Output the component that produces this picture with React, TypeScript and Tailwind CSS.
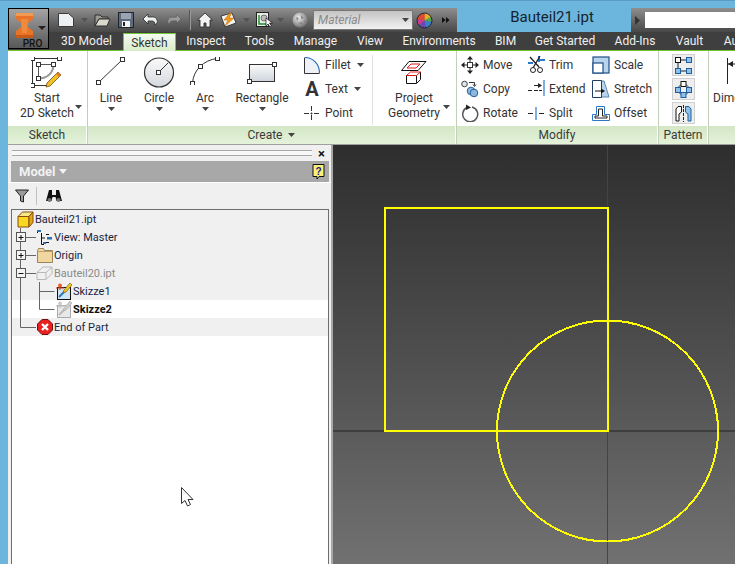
import React from "react";

const Caret = ({ className = "" }: { className?: string }) => (
  <svg width="7" height="4" viewBox="0 0 7 4" className={className}>
    <path d="M0 0h7L3.5 4z" fill="#444" />
  </svg>
);

const tabs: [string, string][] = [
  ["3D Model", "w-[71px]"],
  ["Sketch", "w-[55px]"],
  ["Inspect", "w-[58px]"],
  ["Tools", "w-[49px]"],
  ["Manage", "w-[63px]"],
  ["View", "w-[46px]"],
  ["Environments", "w-[92px]"],
  ["BIM", "w-[41px]"],
  ["Get Started", "w-[78px]"],
  ["Add-Ins", "w-[62px]"],
  ["Vault", "w-[47px]"],
  ["Autodesk", "w-[72px]"],
];

const Sq = ({ x, y, s = 4, c = "#333", f = "#fff" }: { x: number; y: number; s?: number; c?: string; f?: string }) => (
  <rect x={x - s / 2 + 0.5} y={y - s / 2 + 0.5} width={s} height={s} fill={f} stroke={c} />
);

const Qat = () => (
  <div className="flex items-center h-[24px] pl-[10px]">
    <svg width="16" height="16" viewBox="0 0 16 16">
      <path d="M0.500 1.500h10l5 4.500v8.500h-15z" fill="#eef1f4" stroke="#3a3a3a" />
    </svg>
    <Caret className="ml-[7px] opacity-60" />
    <svg width="17" height="16" viewBox="0 0 17 16" className="ml-[6px]">
      <path d="M1 3h5l2 2h6v2H5L1 14z" fill="#9a9a8e" stroke="#2e2e2e" />
      <path d="M1 14l4-7h11l-3 7z" fill="#d8d8cc" stroke="#2e2e2e" />
    </svg>
    <svg width="16" height="16" viewBox="0 0 16 16" className="ml-[7px]">
      <rect x="0.500" y="0.500" width="15" height="15" fill="#5d6a7c" stroke="#20252c" />
      <rect x="3" y="1" width="10" height="6" fill="#9aa4b2" />
      <rect x="4" y="9" width="8" height="6" fill="#f4f4f4" />
      <rect x="5" y="10" width="2" height="4" fill="#222" />
    </svg>
    <svg width="16" height="14" viewBox="0 0 16 14" className="ml-[8px]">
      <path d="M6 1L1 6l5 5V8h4c2 0 3 1 3 4 2-2 3-3 2-5-1-3-3-3-5-3H6z" fill="#eef0f2" stroke="#2a2a2a" strokeWidth="0.8" />
    </svg>
    <svg width="15" height="14" viewBox="0 0 16 14" className="ml-[9px] opacity-40">
      <path d="M10 1l5 5-5 5V8H6c-2 0-3 1-3 4-2-2-3-3-2-5 1-3 3-3 5-3h4z" fill="#ddd" stroke="#444" strokeWidth="0.8" />
    </svg>
    <div className="ml-[7px] w-[2px] h-[20px] bg-[#555] border-r border-[#999]" />
    <svg width="16" height="16" viewBox="0 0 16 16" className="ml-[6px]">
      <path d="M8 1L0.500 8H3v7h4v-4h2v4h4V8h2.500z" fill="#f2f2f2" stroke="#222" strokeWidth="0.8" />
    </svg>
    <svg width="17" height="16" viewBox="0 0 17 16" className="ml-[7px]">
      <path d="M1 4l11-3 4 10-11 4z" fill="#f4f4f4" stroke="#222" strokeWidth="0.8" />
      <path d="M10 1L4 8h4l-3 6 9-8H9l3-5z" fill="#f29a1c" stroke="#b85f00" strokeWidth="0.5" />
    </svg>
    <Caret className="ml-[6px] opacity-60" />
    <svg width="17" height="16" viewBox="0 0 17 16" className="ml-[6px]">
      <rect x="0.500" y="0.500" width="12" height="14" fill="#e6efe6" stroke="#222" />
      <path d="M3 3v9h7" fill="none" stroke="#1f8a2c" strokeWidth="1.4" />
      <circle cx="8" cy="6" r="3" fill="#bbb" stroke="#333" strokeWidth="0.6" />
      <path d="M10 6v8l2-2 2 3 1.500-1-2-3h3z" fill="#fff" stroke="#111" strokeWidth="0.7" />
    </svg>
    <Caret className="ml-[4px] opacity-60" />
    <svg width="16" height="16" viewBox="0 0 16 16" className="ml-[8px]">
      <defs>
        <radialGradient id="sp" cx="0.4" cy="0.35" r="0.7">
          <stop offset="0" stopColor="#f0f0f0" />
          <stop offset="1" stopColor="#6a6a6a" />
        </radialGradient>
      </defs>
      <circle cx="8" cy="8" r="7.500" fill="url(#sp)" />
      <path d="M4 5l3 1-2 3zM9 3l3 3-3 1zM6 11l4-1 1 3zM12 8l2 1-2 3z" fill="#8a8a8a" />
    </svg>
    <div className="ml-[5px] w-[100px] h-[20px] bg-gradient-to-b from-[#c4c4c4] to-[#f2f2f2] flex items-center justify-between pl-[4px] pr-[3px] border border-[#777]">
      <span className="italic text-[12px] text-[#8a8a8a] leading-none">Material</span>
      <Caret />
    </div>
    <svg width="17" height="17" viewBox="0 0 17 17" className="ml-[3px]">
      <path d="M8.500 8.500V1A7.500 7.500 0 0 1 15 5z" fill="#e8b020" />
      <path d="M8.500 8.500L15 5a7.500 7.500 0 0 1 1 5z" fill="#50a848" />
      <path d="M8.500 8.500L16 10a7.500 7.500 0 0 1-6 6z" fill="#3a80c8" />
      <path d="M8.500 8.500L10 16a7.500 7.500 0 0 1-7-3z" fill="#6a48b0" />
      <path d="M8.500 8.500L3 13a7.500 7.500 0 0 1-2-6z" fill="#d03898" />
      <path d="M8.500 8.500L1 7a7.500 7.500 0 0 1 7.500-6z" fill="#e04830" />
      <circle cx="8.500" cy="8.500" r="7.500" fill="none" stroke="#223" />
    </svg>
    <svg width="8" height="6" viewBox="0 0 8 6" className="ml-[9px]">
      <path d="M0 0l3.500 3L0 6zM4 0l3.500 3L4 6z" fill="#111" />
    </svg>
  </div>
);

const LargeBtn = ({ w, icon, lines, caret }: { w: string; icon: React.ReactNode; lines: string[]; caret?: boolean }) => (
  <div className={`${w} shrink-0 flex flex-col items-center`}>
    <div className="h-[40px] pt-[6px] flex items-start justify-center">{icon}</div>
    <div className="text-center leading-[15px] whitespace-nowrap">
      {lines.map((l) => (
        <div key={l}>{l}</div>
      ))}
    </div>
    {caret && <Caret className="mt-[1px]" />}
  </div>
);

const iconStart = (
  <svg width="32" height="32" viewBox="0 0 32 32">
    <path d="M1.500 28.500v-27h27M1.500 28.500H16" fill="none" stroke="#333" strokeWidth="1" />
    <path d="M7.500 7.500h15c0 8-6 14-15 14z" fill="#fff" stroke="#555" />
    <path d="M22.500 7.500c0 8-6 14-15 14" fill="none" stroke="#999" strokeWidth="2" />
    <Sq x={1} y={1} /><Sq x={28} y={1} /><Sq x={1} y={28} /><Sq x={7} y={7} /><Sq x={22} y={7} /><Sq x={7} y={21} />
    <path d="M27 15l3 3-11 11-4 1 1-4z" fill="#f2c029" stroke="#6b4d10" strokeWidth="0.8" />
    <path d="M27 15l3 3-2 2-3-3z" fill="#e27a2a" />
  </svg>
);
const iconLine = (
  <svg width="30" height="28" viewBox="0 0 30 28">
    <path d="M2.500 25.500L26.500 2.500" stroke="#333" />
    <Sq x={2} y={25} /><Sq x={26} y={2} />
  </svg>
);
const iconCircle = (
  <svg width="32" height="32" viewBox="0 0 32 32">
    <defs>
      <linearGradient id="cg" x1="0" y1="0" x2="0" y2="1">
        <stop offset="0" stopColor="#fafafa" />
        <stop offset="1" stopColor="#d4d8de" />
      </linearGradient>
    </defs>
    <circle cx="16" cy="15.500" r="14.500" fill="url(#cg)" stroke="#333" strokeWidth="1.2" />
    <path d="M16 15l9-9" stroke="#333" />
    <Sq x={15} y={15} />
  </svg>
);
const iconArc = (
  <svg width="30" height="28" viewBox="0 0 30 28">
    <path d="M2.500 26.500C3 13 14 3 27 1.500" fill="none" stroke="#333" />
    <Sq x={2} y={26} /><Sq x={10} y={9} /><Sq x={27} y={1} />
  </svg>
);
const iconRect = (
  <svg width="30" height="22" viewBox="0 0 30 22">
    <defs>
      <linearGradient id="rg" x1="0" y1="0" x2="0" y2="1">
        <stop offset="0" stopColor="#fafafa" />
        <stop offset="1" stopColor="#cfd4dc" />
      </linearGradient>
    </defs>
    <rect x="2.500" y="2.500" width="25" height="17" fill="url(#rg)" stroke="#333" />
    <Sq x={2} y={19} /><Sq x={27} y={2} />
  </svg>
);
const iconFillet = (
  <svg width="16" height="17" viewBox="0 0 16 17">
    <path d="M0.500 1v15H15c0-8-6-15-14-15" fill="#eef1f5" />
    <path d="M0.500 1v15.500H15.500" fill="none" stroke="#333" />
    <path d="M0.500 0.500C9 0.500 15.500 7 15.500 16" fill="none" stroke="#2a6fc0" strokeWidth="1.200" />
  </svg>
);
const iconPoint = (
  <svg width="16" height="16" viewBox="0 0 16 16">
    <path d="M0 8.500h5M10 8.500h5M7.500 1v5M7.500 10v5M7 8h1v1H7z" stroke="#333" fill="none" />
  </svg>
);
const iconProject = (
  <svg width="26" height="25" viewBox="0 0 26 25">
    <path d="M0.500 10.500L8 1.500h17L17 10.500z" fill="#fff" stroke="#111" />
    <path d="M6 8l4-4h9l-4 4z" fill="none" stroke="#e01818" />
    <path d="M5.500 15.500h10v8h-10z" fill="#fff" stroke="#111" />
    <path d="M15.500 23.500l4-4V12" fill="#fff" stroke="#111" />
    <path d="M5.500 15.500l4-3.500h10l-4 3.500z" fill="#fff" stroke="#e01818" />
    <path d="M5.500 15.500h10" stroke="#e01818" />
  </svg>
);

const SmallItem = ({ icon, label, caret, iconW, gap }: { icon: React.ReactNode; label: string; caret?: string; iconW: string; gap: string }) => (
  <div className={`h-[24px] flex items-center ${gap}`}>
    <div className={`${iconW} shrink-0 flex justify-center items-center`}>{icon}</div>
    <span className="whitespace-nowrap">{label}</span>
    {caret && <Caret className={caret} />}
  </div>
);

const blue = "#2a78c8";
const modifyCols: { label: string; icon: React.ReactNode }[][] = [
  [
    {
      label: "Move",
      icon: (
        <svg width="18" height="18" viewBox="0 0 18 18">
          <rect x="6.500" y="6.500" width="5" height="5" fill="#fff" stroke="#333" />
          <path d="M9 0l3 3.500H6zM9 18l3-3.500H6zM0 9l3.500-3v6zM18 9l-3.500-3v6z" fill="#222" />
          <path d="M9 3v3M9 12v3M3 9h3M12 9h3" stroke="#222" />
        </svg>
      ),
    },
    {
      label: "Copy",
      icon: (
        <svg width="18" height="18" viewBox="0 0 18 18">
          <circle cx="3.500" cy="4" r="2.800" fill="#dce6f0" stroke="#444" />
          <circle cx="10" cy="11" r="3.800" fill="#8ab8e0" stroke="#2a5f9a" />
          <circle cx="13" cy="13" r="3.800" fill="#8ab8e0" stroke="#2a5f9a" />
          <path d="M8 2.500h5.500v3M12 4.500l1.500 2 1.500-2" fill="none" stroke="#333" />
        </svg>
      ),
    },
    {
      label: "Rotate",
      icon: (
        <svg width="18" height="18" viewBox="0 0 18 18">
          <path d="M6 3.500a7.500 7.500 0 1 0 5-.5" fill="none" stroke="#555" strokeWidth="1.500" />
          <path d="M5 0.500l5 3-5 2.500z" fill="#222" />
        </svg>
      ),
    },
  ],
  [
    {
      label: "Trim",
      icon: (
        <svg width="17" height="18" viewBox="0 0 17 18">
          <path d="M0 7h5M11 4h6M11 0v6" stroke={blue} strokeWidth="2" fill="none" />
          <path d="M2 1l9 10M12 0L5 12" stroke="#222" fill="none" strokeWidth="1.300" />
          <circle cx="5" cy="14" r="2.500" fill="#fff" stroke="#222" />
          <circle cx="12" cy="14" r="2.500" fill="#fff" stroke="#222" />
        </svg>
      ),
    },
    {
      label: "Extend",
      icon: (
        <svg width="17" height="18" viewBox="0 0 17 18">
          <path d="M0 10.500h4M6 10.500h4M11 10.500h3" stroke="#222" />
          <path d="M6 5.500h6" stroke="#222" />
          <path d="M10 3l4 2.500-4 2.500z" fill="#222" />
          <path d="M16 0v16" stroke={blue} strokeWidth="1.200" />
        </svg>
      ),
    },
    {
      label: "Split",
      icon: (
        <svg width="17" height="18" viewBox="0 0 17 18">
          <path d="M0 9.500h5M11 9.500h5" stroke="#222" />
          <path d="M8 3v13" stroke={blue} strokeWidth="1.200" />
        </svg>
      ),
    },
  ],
  [
    {
      label: "Scale",
      icon: (
        <svg width="18" height="18" viewBox="0 0 18 18">
          <rect x="1" y="1" width="16" height="16" fill="#b8d4ec" stroke="#1f4f86" strokeWidth="1.200" />
          <rect x="1" y="7" width="10" height="10" fill="#fff" stroke="#1f4f86" strokeWidth="1.200" />
        </svg>
      ),
    },
    {
      label: "Stretch",
      icon: (
        <svg width="18" height="18" viewBox="0 0 18 18">
          <path d="M12 1l5 16H9V1z" fill="#b8d4ec" stroke="#5a88b4" />
          <path d="M0.500 0.500h9v17h-9z" fill="#fff" stroke="#1f3f66" />
          <path d="M3 11h7" stroke="#111" />
          <path d="M9 8.500l4 2.500-4 2.500z" fill="#111" />
        </svg>
      ),
    },
    {
      label: "Offset",
      icon: (
        <svg width="18" height="16" viewBox="0 0 18 16">
          <path d="M0.500 15.500v-6h4v-8h8v8h5v6z" fill="none" stroke={blue} />
          <path d="M3 13v-2h3.500V4h4v7H15v2z" fill="none" stroke="#222" />
        </svg>
      ),
    },
  ],
];

const patternIcons = [
  <svg key="a" width="17" height="17" viewBox="0 0 17 17">
    <path d="M3 3h11M3 3v11M3 14h11" stroke="#222" fill="none" />
    <rect x="0.500" y="0.500" width="5" height="5" fill="#fff" stroke="#111" />
    <rect x="11.500" y="0.500" width="5" height="5" fill="#8ec0ea" stroke="#1f5f9f" />
    <rect x="0.500" y="11.500" width="5" height="5" fill="#8ec0ea" stroke="#1f5f9f" />
    <rect x="11.500" y="11.500" width="5" height="5" fill="#8ec0ea" stroke="#1f5f9f" />
  </svg>,
  <svg key="b" width="17" height="17" viewBox="0 0 17 17">
    <circle cx="8.500" cy="8.500" r="5.500" fill="none" stroke="#444" />
    <rect x="6" y="0.500" width="5" height="5" fill="#fff" stroke="#111" />
    <rect x="0.500" y="6.500" width="5" height="5" fill="#8ec0ea" stroke="#1f5f9f" />
    <rect x="11.500" y="6.500" width="5" height="5" fill="#8ec0ea" stroke="#1f5f9f" />
    <rect x="6" y="11.500" width="5" height="5" fill="#8ec0ea" stroke="#1f5f9f" />
  </svg>,
  <svg key="c" width="17" height="17" viewBox="0 0 17 17">
    <path d="M6.500 1.500H3L1 4v12h3V9l2.500-2z" fill="#fff" stroke="#111" />
    <path d="M10.500 1.500H14L16 4v12h-3V9l-2.500-2z" fill="#8ec0ea" stroke="#1f5f9f" />
    <path d="M8.500 0v17" stroke="#222" strokeDasharray="3 1" />
  </svg>,
];

const PanelBar = ({ w, children }: { w: string; children: React.ReactNode }) => (
  <div className={`${w} h-[18px] shrink-0 flex items-center justify-center gap-[6px] bg-gradient-to-b from-[#d3e7c5] to-[#e4f2da] text-[#3a3a3a] leading-none`}>
    {children}
  </div>
);

const Sep = () => (
  <div className="w-[2px] shrink-0 flex">
    <div className="w-[1px] bg-white" />
    <div className="w-[1px] bg-[#c3cfbb]" />
  </div>
);

const Ribbon = () => (
  <div className="h-[94px] shrink-0 flex flex-col bg-white text-[12px] text-[#333]">
    <div className="h-[75px] flex">
      <div className="w-[78px] shrink-0 relative">
        <LargeBtn w="w-[78px]" icon={iconStart} lines={["Start", "2D Sketch"]} />
        <Caret className="absolute left-[67px] top-[54px]" />
      </div>
      <Sep />
      <div className="w-[367px] shrink-0 flex">
        <LargeBtn w="w-[46px]" icon={iconLine} lines={["Line"]} caret />
        <LargeBtn w="w-[50px]" icon={iconCircle} lines={["Circle"]} caret />
        <LargeBtn w="w-[42px]" icon={iconArc} lines={["Arc"]} caret />
        <LargeBtn w="w-[72px]" icon={<div className="pt-[5px]">{iconRect}</div>} lines={["Rectangle"]} caret />
        <div className="w-[74px] shrink-0 pl-[6px] pt-[2px]">
          <SmallItem iconW="w-[16px]" gap="gap-[5px]" icon={iconFillet} label="Fillet" caret="ml-[1px]" />
          <SmallItem
            iconW="w-[16px]"
            gap="gap-[5px]"
            icon={<span className="text-[20px] font-bold leading-none text-[#333]">A</span>}
            label="Text"
            caret="ml-[1px]"
          />
          <SmallItem iconW="w-[16px]" gap="gap-[5px]" icon={iconPoint} label="Point" />
        </div>
        <div className="w-[1px] h-[70px] mt-[4px] bg-[#e2e2e2]" />
        <div className="flex-1 relative">
          <LargeBtn w="w-full" icon={<div className="pt-[3px]">{iconProject}</div>} lines={["Project", "Geometry"]} />
          <Caret className="absolute left-[70px] top-[54px]" />
        </div>
      </div>
      <Sep />
      <div className="w-[200px] shrink-0 flex pt-[2px]">
        {modifyCols.map((col, i) => (
          <div key={i} className={`${i === 0 ? "w-[66px]" : i === 1 ? "w-[65px]" : "w-[69px]"} shrink-0 pl-[4px]`}>
            {col.map((it) => (
              <SmallItem key={it.label} iconW="w-[18px]" gap="gap-[4px]" icon={it.icon} label={it.label} />
            ))}
          </div>
        ))}
      </div>
      <Sep />
      <div className="w-[48px] shrink-0 flex flex-col items-center pt-[3px] gap-[2px]">
        {patternIcons.map((ic, i) => (
          <div key={i} className="w-[23px] h-[22px] bg-[#eeeeee] border border-[#d0d0d0] flex items-center justify-center">
            {ic}
          </div>
        ))}
      </div>
      <Sep />
      <div className="flex-1 pl-[4px] overflow-hidden">
        <div className="h-[40px] pt-[7px] pl-[14px]">
          <svg width="14" height="26" viewBox="0 0 14 26">
            <path d="M0.500 0v26M1 6h14" stroke="#222" fill="none" />
            <path d="M1 6l5-3v6z" fill="#222" />
          </svg>
        </div>
        <div className="leading-[15px]">Dimension</div>
      </div>
    </div>
    <div className="flex">
      <PanelBar w="w-[78px]">Sketch</PanelBar>
      <Sep />
      <PanelBar w="w-[367px]">
        <span>Create</span>
        <Caret />
      </PanelBar>
      <Sep />
      <PanelBar w="w-[200px]">Modify</PanelBar>
      <Sep />
      <PanelBar w="w-[48px]">Pattern</PanelBar>
      <Sep />
      <PanelBar w="flex-1"> </PanelBar>
    </div>
    <div className="h-[1px] bg-[#9f9f9f]" />
  </div>
);

const Gutter = ({ w, children }: { w: number; children: React.ReactNode }) => (
  <svg width={w} height="18" viewBox={`0 0 ${w} 18`} className="shrink-0">
    {children}
  </svg>
);
const Exp = ({ plus }: { plus?: boolean }) => (
  <g>
    <rect x="4.500" y="4.500" width="9" height="9" fill="#f4f4f4" stroke="#555" />
    <path d={plus ? "M6.500 9h5M9 6.500v5" : "M6.500 9h5"} stroke="#111" fill="none" transform="translate(0 0.500)" />
  </g>
);
const L = "#666";
const treeIcons = {
  part: (
    <svg width="17" height="17" viewBox="0 0 17 17" className="shrink-0">
      <path d="M1 5.500h11v10.500H1z" fill="#f8d820" stroke="#8a4a10" />
      <path d="M1 5.500L5.500 1H16L12 5.500z" fill="#f8e888" stroke="#8a4a10" />
      <path d="M12 5.500L16 1v10.500l-4 4.500z" fill="#e0a818" stroke="#8a4a10" />
    </svg>
  ),
  view: (
    <svg width="17" height="15" viewBox="0 0 17 15" className="shrink-0">
      <path d="M1.500 3V1M5.500 3v11.500H8M5.500 8H9" fill="none" stroke="#111" />
      <path d="M10 4.500h3M10 12.500h3" stroke="#111" fill="none" />
      <rect x="1" y="0" width="4" height="2" fill="#2a6fb0" />
      <rect x="11" y="7" width="5" height="2.500" fill="#2a6fb0" />
      <rect x="7" y="12" width="3" height="2" fill="#2a6fb0" />
    </svg>
  ),
  folder: (
    <svg width="16" height="15" viewBox="0 0 16 15" className="shrink-0">
      <path d="M0.500 14.500v-12l1-2h5l1 2h8v12z" fill="#f2d6a0" stroke="#9a845a" />
      <path d="M0.500 3.500h15" stroke="#b8a070" />
    </svg>
  ),
  ghost: (
    <svg width="17" height="14" viewBox="0 0 17 14" className="shrink-0">
      <path d="M1 6.500h9v7H1zM1 6.500L7 1h9l-6 5.500zM10 13.500l6-6V1" fill="#f0f0f0" stroke="#b8b8b8" />
    </svg>
  ),
  sketch: (active: boolean) => (
    <svg width="16" height="17" viewBox="0 0 16 17" className="shrink-0">
      <rect x="1.500" y="4.500" width="13" height="12" fill={active ? "#d0e4f4" : "#e8e8e8"} stroke={active ? "#111" : "#aaa"} />
      <path d="M3 14l8-8" stroke={active ? "#2a78c8" : "#bbb"} strokeWidth="2" />
      <path d="M14 0l2 2-6 7-3 1 1-3z" fill={active ? "#f2c820" : "#ccc"} stroke={active ? "#6b4d10" : "#aaa"} strokeWidth="0.6" />
      <circle cx="4" cy="2.500" r="2" fill={active ? "#e8602a" : "#ccc"} />
      <path d="M0 5h8M4 4v3" stroke={active ? "#c8401a" : "#bbb"} />
    </svg>
  ),
  stop: (
    <svg width="16" height="16" viewBox="0 0 16 16" className="shrink-0">
      <path d="M5 0.500h6L15.500 5v6L11 15.500H5L0.500 11V5z" fill="#e82020" stroke="#701010" />
      <path d="M5 5l6 6M11 5l-6 6" stroke="#fff" strokeWidth="2.400" />
    </svg>
  ),
};

const Row = ({ bg, gutter, w, icon, text, cls }: { bg: string; gutter: React.ReactNode; w: number; icon: React.ReactNode; text: string; cls?: string }) => (
  <div className={`h-[18px] flex items-center ${bg}`}>
    <Gutter w={w}>{gutter}</Gutter>
    <div className="w-[17px] shrink-0 flex justify-center">{icon}</div>
    <span className={`ml-[1px] whitespace-nowrap ${cls ?? "text-[#1b2540]"}`}>{text}</span>
  </div>
);

const Tree = () => (
  <div className="flex-1 relative bg-white border border-[#6e6e6e] border-b-0 text-[11px] leading-none">
    <Row bg="bg-[#f0f0f0]" w={5} gutter={null} icon={treeIcons.part} text="Bauteil21.ipt" />
    <Row
      bg="bg-[#f0f0f0]"
      w={24}
      gutter={<><path d="M8.500 0v18M14 9.500h10" stroke={L} /><Exp plus /></>}
      icon={treeIcons.view}
      text="View: Master"
    />
    <Row
      bg="bg-[#f0f0f0]"
      w={24}
      gutter={<><path d="M8.500 0v18M14 9.500h10" stroke={L} /><Exp plus /></>}
      icon={treeIcons.folder}
      text="Origin"
    />
    <Row
      bg="bg-[#f0f0f0]"
      w={24}
      gutter={<><path d="M8.500 0v18M14 9.500h10" stroke={L} /><Exp /></>}
      icon={treeIcons.ghost}
      text="Bauteil20.ipt"
      cls="text-[#8a8a8a]"
    />
    <Row
      bg="bg-[#f0f0f0]"
      w={43}
      gutter={<><path d="M8.500 0v18M27.500 0v18M27.500 9.500h15" stroke={L} /></>}
      icon={treeIcons.sketch(true)}
      text="Skizze1"
    />
    <Row
      bg="bg-white"
      w={43}
      gutter={<><path d="M8.500 0v18M27.500 0v9.500h15" stroke={L} fill="none" /></>}
      icon={treeIcons.sketch(false)}
      text="Skizze2"
      cls="font-bold text-[#111]"
    />
    <Row
      bg="bg-[#f0f0f0]"
      w={24}
      gutter={<path d="M8.500 0v9.500H24" stroke={L} fill="none" />}
      icon={treeIcons.stop}
      text="End of Part"
    />
    <svg width="14" height="20" viewBox="0 0 14 20" className="absolute left-[169px] top-[277px]">
      <path d="M0.500 0.500v16l3.500-3 2.500 5.500 3-1.500-2.500-5h5z" fill="#fff" stroke="#333" />
    </svg>
  </div>
);

const Browser = () => (
  <div className="w-[323px] shrink-0 flex flex-col bg-[#f0f0f0] text-[12px]">
    <div className="h-[16px] flex items-center pl-[4px] pr-[6px]">
      <div className="w-[302px] h-[6px] border-y border-[#a8a8a8] bg-[#f8f8f8]" />
      <span className="ml-[6px] text-[13px] font-bold leading-none text-[#111]">×</span>
    </div>
    <div className="ml-[3px] w-[318px] h-[21px] bg-[#a8a8a8] flex items-center justify-between pl-[8px] pr-[4px]">
      <div className="flex items-center gap-[3px]">
        <span className="text-[13px] font-bold text-[#f2f2f2] leading-none">Model</span>
        <svg width="8" height="5" viewBox="0 0 8 5"><path d="M0 0h8L4 5z" fill="#f2f2f2" /></svg>
      </div>
      <svg width="13" height="16" viewBox="0 0 13 16">
        <path d="M1 0.500h11v12H7l-2 2.500v-2.500H1z" fill="#f8f078" stroke="#111" />
        <text x="6.500" y="10.500" textAnchor="middle" fontSize="10" fontWeight="700" fill="#1a1a80" fontFamily="Liberation Sans, sans-serif">?</text>
      </svg>
    </div>
    <div className="h-[27px] flex items-center pl-[7px] border-t border-white">
      <svg width="14" height="14" viewBox="0 0 14 14">
        <path d="M0.500 1h13L8.500 7v6l-3-1V7z" fill="#9a9a9a" stroke="#222" />
      </svg>
      <div className="ml-[7px] w-[1px] h-[18px] bg-[#c0c0c0]" />
      <svg width="16" height="14" viewBox="0 0 16 14" className="ml-[9px]">
        <path d="M3 1h3v5h4V1h3l3 11h-5.500L9.500 8h-3l-1 4H0z" fill="#111" />
        <circle cx="3.500" cy="11" r="2" fill="#777" />
        <circle cx="12.500" cy="11" r="2" fill="#777" />
      </svg>
    </div>
    <div className="ml-[3px] w-[318px] flex-1 flex flex-col">
      <Tree />
    </div>
  </div>
);

const Canvas = () => (
  <div className="flex-1 border-l-[2px] border-[#a8a8a8] -ml-[2px] bg-gradient-to-b from-[#2e2e2e] to-[#717171] overflow-hidden">
    <svg width="402" height="419" viewBox="333 145 402 419" className="block">
      <path d="M607.500 145V564" stroke="#444" />
      <path d="M333 431H735" stroke="#3e3e3e" strokeWidth="2" />
      <rect x="385" y="208" width="222.500" height="223" fill="none" stroke="#ffff00" strokeWidth="2" shapeRendering="crispEdges" />
      <circle cx="607.500" cy="431" r="110.500" fill="none" stroke="#ffff00" strokeWidth="2" shapeRendering="crispEdges" />
    </svg>
  </div>
);

export default function App() {
  return (
    <div className="w-[735px] h-[564px] overflow-hidden flex flex-col bg-[#6cb5dd] relative font-['Roboto',sans-serif]">
      <div className="h-[32px] shrink-0 flex pt-[7px] border-t border-[#5a9dc4]">
        <div className="ml-[48px] w-[409px] h-[24px] bg-gradient-to-b from-[#8f8f8f] to-[#484848]">
          <Qat />
        </div>
        <div className="w-[174px] pl-[16px] text-center text-[15px] leading-[18px] text-[#15232e]">Bauteil21.ipt</div>
        <div className="flex-1 h-[24px] bg-gradient-to-b from-[#8f8f8f] to-[#484848] flex items-center pl-[4px]">
          <svg width="5" height="9" viewBox="0 0 5 9" className="shrink-0"><path d="M0 0l5 4.500L0 9z" fill="#333" /></svg>
          <div className="ml-[5px] flex-1 h-[16px] bg-white" />
        </div>
      </div>
      <div className="ml-[8px] h-[19px] shrink-0 bg-[#3f3f3f] border-b border-[#6fc52a] flex pl-[43px] text-[12px] leading-none">
        {tabs.map(([t, w]) =>
          t === "Sketch" ? (
            <div key={t} className={`${w} shrink-0 px-[1px]`}>
              <div className="h-[18px] mt-[1px] flex items-center justify-center border border-b-0 border-[#74c832] bg-gradient-to-b from-[#f6fbf2] to-[#d8ecc8] text-[#333]">
                {t}
              </div>
            </div>
          ) : (
            <div key={t} className={`${w} shrink-0 h-[18px] flex items-center justify-center text-[#f0f0f0] whitespace-nowrap`}>
              {t}
            </div>
          )
        )}
      </div>
      <div className="absolute left-[8px] top-[8px] w-[41px] h-[41px] border border-black bg-gradient-to-b from-[#a4a4a4] to-[#585858] flex flex-col items-center">
        <svg width="39" height="31" viewBox="0 0 39 31" className="shrink-0">
          <path d="M7 4h17v6l-5 4v4l5 4v7H7v-7l5-4v-4l-5-4z" fill="#e8742a" />
          <path d="M12 10h7l-1 14h-5z" fill="#f08a3c" />
          <path d="M7 4h17v3H7z" fill="#f29a52" />
          <path d="M7 26h17v3H7z" fill="#c85a18" />
          <path d="M29 17h8l-4 4z" fill="#222" />
        </svg>
        <span className="ml-[8px] text-[10px] leading-[8px] text-[#111] font-medium">PRO</span>
      </div>
      <div className="ml-[8px] flex-1 flex flex-col min-h-0">
        <Ribbon />
        <div className="flex-1 flex min-h-0">
          <Browser />
          <div className="w-[2px]" />
          <Canvas />
        </div>
      </div>
    </div>
  );
}
